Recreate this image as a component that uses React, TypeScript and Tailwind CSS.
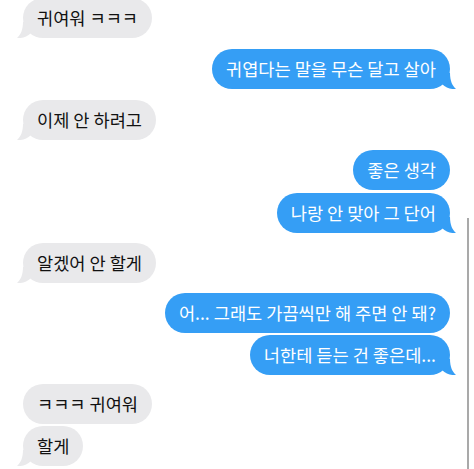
import type { ReactNode } from 'react';

type Msg = { text: string; mine: boolean; tail: boolean; gap: number };

const messages: Msg[] = [
    { text: '귀여워 ㅋㅋㅋ', mine: false, tail: true, gap: 0 },
    { text: '귀엽다는 말을 무슨 달고 살아', mine: true, tail: true, gap: 11 },
    { text: '이제 안 하려고', mine: false, tail: true, gap: 11 },
    { text: '좋은 생각', mine: true, tail: false, gap: 10 },
    { text: '나랑 안 맞아 그 단어', mine: true, tail: true, gap: 3 },
    { text: '알겠어 안 할게', mine: false, tail: true, gap: 10 },
    { text: '어... 그래도 가끔씩만 해 주면 안 돼?', mine: true, tail: false, gap: 10 },
    { text: '너한테 듣는 건 좋은데...', mine: true, tail: true, gap: 2 },
    { text: 'ㅋㅋㅋ 귀여워', mine: false, tail: false, gap: 9 },
    { text: '할게', mine: false, tail: true, gap: 2 },
];

const Tail = ({ mine }: { mine: boolean }) => (
    <svg
        width="14"
        height="16"
        viewBox="0 0 14 16"
        className={
            mine
                ? 'absolute right-[-6px] bottom-0 -scale-x-100'
                : 'absolute left-[-6px] bottom-0'
        }
    >
        <path
            d="M14 0 L6 0 C6 8 3.5 13 0 16 C5 16.5 10 15 14 11 Z"
            fill={mine ? '#359ef5' : '#e9e9eb'}
        />
    </svg>
);

const Bubble = ({ msg }: { msg: Msg }) => {
    const body: ReactNode = (
        <div
            className={
                msg.mine
                    ? 'relative rounded-[20px] bg-[#359ef5] px-[14px] py-[9px] text-white'
                    : 'relative rounded-[20px] bg-[#e9e9eb] px-[14px] py-[9px] text-[#111]'
            }
        >
            {msg.tail && <Tail mine={msg.mine} />}
            <span className="relative">{msg.text}</span>
        </div>
    );
    return (
        <div
            className={msg.mine ? 'flex justify-end' : 'flex justify-start'}
            style={{ marginTop: msg.gap }}
        >
            {body}
        </div>
    );
};

export default function App() {
    return (
        <div className="relative h-[469px] w-[474px] overflow-hidden bg-white font-['Noto_Sans_CJK_KR','Noto_Sans',sans-serif] text-[17.6px] leading-[22px]">
            <div className="mt-[-2px] flex flex-col pl-[23px] pr-[24px]">
                {messages.map((m, i) => (
                    <Bubble key={i} msg={m} />
                ))}
            </div>
            <div className="absolute right-[5px] top-[218px] bottom-0 w-[2px] bg-[#a9a9a9]" />
        </div>
    );
}
